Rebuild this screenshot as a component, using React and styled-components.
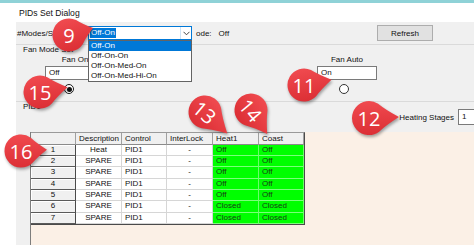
import React from "react";
import styled, { createGlobalStyle } from "styled-components";

const GlobalStyle = createGlobalStyle`
  html, body {
    margin: 0;
    padding: 0;
    background: #ffffff;
  }
  body {
    font-family: "Liberation Sans", Arial, sans-serif;
    font-size: 8px;
    color: #111111;
  }
`;

const Page = styled.div`
  position: relative;
  width: 474px;
  height: 245px;
  overflow: hidden;
  background: #ffffff;
  display: flex;
  flex-direction: column;
`;

const TopLine = styled.div`
  flex: none;
  height: 3px;
  background: #8fd2d7;
`;

const TitleBar = styled.div`
  flex: none;
  height: 19px;
  display: flex;
  align-items: center;
  padding-left: 19px;
  font-size: 8.6px;
  color: #111;
`;

const Dialog = styled.div`
  flex: 1;
  min-height: 0;
  margin-left: 16px;
  background: #f0f0f0;
  display: flex;
  flex-direction: column;
  overflow: hidden;
`;

const TopRow = styled.div`
  flex: none;
  height: 16px;
  margin-top: 3px;
  display: flex;
  align-items: center;
`;

const ModesLabel = styled.div`
  width: 72px;
  padding-left: 1px;
  box-sizing: border-box;
  white-space: nowrap;
  overflow: hidden;
`;

const Combo = styled.div`
  position: relative;
  width: 104px;
  height: 14px;
  box-sizing: border-box;
  border: 1px solid #0078d7;
  background: #fff;
  display: flex;
  align-items: center;
  z-index: 2;
`;

const ComboValue = styled.span`
  margin-left: 1px;
  padding: 0 1px;
  line-height: 10px;
  background: #0078d7;
  color: #fff;
`;

const ComboArrow = styled.div`
  margin-left: auto;
  width: 11px;
  height: 12px;
  box-sizing: border-box;
  border-left: 1px solid #cfe3f5;
  display: flex;
  align-items: center;
  justify-content: center;
`;

const ComboList = styled.ul`
  position: absolute;
  top: 13px;
  left: -1px;
  width: 104px;
  margin: 0;
  padding: 0;
  list-style: none;
  box-sizing: border-box;
  border: 1px solid #646464;
  background: #fff;
`;

const ComboItem = styled.li`
  height: 10px;
  line-height: 10px;
  padding-left: 2px;
  white-space: nowrap;
  background: ${(p) => (p.$active ? "#0078d7" : "transparent")};
  color: ${(p) => (p.$active ? "#fff" : "#111")};
`;

const ModeText = styled.div`
  margin-left: 4px;
  display: flex;
  gap: 7px;
`;

const RefreshButton = styled.button`
  margin-left: auto;
  margin-right: 41px;
  width: 56px;
  height: 16px;
  padding: 0;
  box-sizing: border-box;
  border: 1px solid #adadad;
  background: #e1e1e1;
  font-family: "Liberation Sans", Arial, sans-serif;
  font-size: 8px;
  color: #111;
`;

const Separator = styled.div`
  flex: none;
  margin-top: ${(p) => p.$top || 0}px;
  border-top: 1px solid #dadada;
`;

const FanSection = styled.div`
  flex: none;
  height: 56px;
`;

const SectionLabel = styled.div`
  height: 9px;
  line-height: 9px;
  padding-left: 7px;
  white-space: nowrap;
`;

const FanRow = styled.div`
  display: flex;
  gap: 212px;
  padding-left: 29px;
`;

const FanGroup = styled.div`
  width: 60px;
  display: flex;
  flex-direction: column;
  align-items: center;
`;

const FanLabel = styled.div`
  margin-top: 1px;
  height: 9px;
  line-height: 9px;
  white-space: nowrap;
`;

const TextBox = styled.div`
  margin-top: 2px;
  height: 14px;
  box-sizing: border-box;
  border: 1px solid #7a7a7a;
  background: #fff;
  padding-left: 3px;
  line-height: 12px;
  align-self: stretch;
`;

const Radio = styled.div`
  margin-top: 4px;
  margin-right: ${(p) => p.$shift}px;
  width: 10px;
  height: 10px;
  box-sizing: border-box;
  border-radius: 50%;
  border: ${(p) => (p.$checked ? "1.5px solid #1a1a1a" : "1px solid #333")};
  background: #fff;
  display: flex;
  align-items: center;
  justify-content: center;

  &::after {
    content: "";
    width: 5px;
    height: 5px;
    border-radius: 50%;
    background: ${(p) => (p.$checked ? "#111" : "transparent")};
  }
`;

const PidRow = styled.div`
  flex: none;
  height: 24px;
  display: flex;
  justify-content: space-between;
`;

const StagesGroup = styled.div`
  align-self: flex-end;
  margin-bottom: 1px;
  display: flex;
  align-items: center;
  gap: 4px;
  margin-right: -14px;
`;

const StagesInput = styled.div`
  width: 30px;
  height: 16px;
  box-sizing: border-box;
  border: 1px solid #7a7a7a;
  background: #fff;
  padding-left: 3px;
  line-height: 14px;
`;

const TableArea = styled.div`
  flex: 1;
  margin-top: 6px;
  margin-left: 14px;
  background: #fbf0e6;
  border-left: 1px solid #7d7d7d;
`;

const Grid = styled.div`
  display: grid;
  grid-template-columns: 45px 46px 45px 46px 46px 45px;
  grid-template-rows: 12px 11px 11px 12px 11px 11px 12px 11px;
  width: max-content;
  border-top: 1px solid #9a9a9a;
  border-right: 1px solid #4a4a4a;
  border-bottom: 1px solid #4a4a4a;
`;

const HeaderCell = styled.div`
  box-sizing: border-box;
  background: #f0f0f0;
  border-right: 1px solid #a0a0a0;
  border-bottom: 1px solid #8a8a8a;
  padding-left: 3px;
  line-height: 11px;
  white-space: nowrap;
`;

const RowHeadCell = styled.div`
  box-sizing: border-box;
  background: #f0f0f0;
  border-right: 1px solid #4a4a4a;
  border-bottom: 1px solid #5a5a5a;
  box-shadow: inset 1px 1px 0 #ffffff;
  text-align: center;
  line-height: 10px;
`;

const DataCell = styled.div`
  box-sizing: border-box;
  background: ${(p) => (p.$green ? "#00ff00" : "#ffffff")};
  border-right: 1px solid ${(p) => (p.$green ? "#6bff6b" : "#d6d6d6")};
  border-bottom: 1px solid ${(p) => (p.$green ? "#7bff7b" : "#d6d6d6")};
  color: ${(p) => (p.$green ? "#173d17" : "#111")};
  text-align: ${(p) => p.$align || "left"};
  padding-left: ${(p) => (p.$align === "center" ? 0 : 3)}px;
  line-height: 10px;
  white-space: nowrap;
`;

const PinWrap = styled.div`
  position: absolute;
  left: ${(p) => p.$x - 40}px;
  top: ${(p) => p.$y - 40}px;
  width: 80px;
  height: 80px;
  pointer-events: none;
  z-index: 5;
`;

const PinSvg = styled.svg`
  position: absolute;
  left: 0;
  top: 0;
  overflow: visible;
  filter: drop-shadow(1px 2px 1.5px rgba(0, 0, 0, 0.35));
`;

const PinText = styled.span`
  position: absolute;
  left: 0;
  top: 0;
  width: 80px;
  height: 80px;
  display: flex;
  align-items: center;
  justify-content: center;
  color: #ffffff;
  font-family: "Open Sans", "Liberation Sans", sans-serif;
  font-size: 20px;
  transform: rotate(${(p) => p.$rot}deg);
`;

const Pin = ({ x, y, r, d, angle, textAngle = 0, label }) => {
  const a = Math.acos(r / d);
  const px = r * Math.cos(a);
  const py = r * Math.sin(a);
  const path = `M ${d} 0 Q ${px + (d - px) * 0.35} ${-py * 0.55} ${px} ${-py} A ${r} ${r} 0 1 0 ${px} ${py} Q ${px + (d - px) * 0.35} ${py * 0.55} ${d} 0 Z`;
  return (
    <PinWrap $x={x} $y={y}>
      <PinSvg width="80" height="80" viewBox="-40 -40 80 80">
        <defs>
          <linearGradient id={`pg${label}`} x1="0" y1="0" x2="0" y2="1">
            <stop offset="0" stopColor="#f04a4f" />
            <stop offset="1" stopColor="#dc2f35" />
          </linearGradient>
        </defs>
        <path d={path} fill={`url(#pg${label})`} transform={`rotate(${angle})`} />
      </PinSvg>
      <PinText $rot={textAngle}>{label}</PinText>
    </PinWrap>
  );
};

const pins = [
  { label: "9", x: 69, y: 35, r: 16.5, d: 25, angle: -16 },
  { label: "15", x: 40, y: 92, r: 16.5, d: 28, angle: -10 },
  { label: "16", x: 21, y: 151, r: 16.5, d: 26, angle: -3 },
  { label: "11", x: 304, y: 85, r: 16.5, d: 28, angle: -11 },
  { label: "12", x: 369, y: 118, r: 17, d: 30, angle: -2 },
  { label: "13", x: 205, y: 112, r: 16.5, d: 31, angle: 44, textAngle: 40 },
  { label: "14", x: 251, y: 110, r: 16.5, d: 29, angle: 56, textAngle: 50 },
];

const modes = ["Off-On", "Off-On-On", "Off-On-Med-On", "Off-On-Med-Hi-On"];

const rows = [
  { desc: "Heat", heat: "Off", coast: "Off" },
  { desc: "SPARE", heat: "Off", coast: "Off" },
  { desc: "SPARE", heat: "Off", coast: "Off" },
  { desc: "SPARE", heat: "Off", coast: "Off" },
  { desc: "SPARE", heat: "Off", coast: "Off" },
  { desc: "SPARE", heat: "Closed", coast: "Closed" },
  { desc: "SPARE", heat: "Closed", coast: "Closed" },
];

const columns = ["", "Description", "Control", "InterLock", "Heat1", "Coast"];

export default function App() {
  return (
    <Page>
      <GlobalStyle />
      <TopLine />
      <TitleBar>PIDs Set Dialog</TitleBar>
      <Dialog>
        <TopRow>
          <ModesLabel>#Modes/Stages</ModesLabel>
          <Combo>
            <ComboValue>Off-On</ComboValue>
            <ComboArrow>
              <svg width="7" height="5" viewBox="0 0 7 5">
                <polyline points="0.5,0.8 3.5,3.8 6.5,0.8" fill="none" stroke="#444" strokeWidth="1" />
              </svg>
            </ComboArrow>
            <ComboList>
              {modes.map((m, i) => (
                <ComboItem key={m} $active={i === 0}>
                  {m}
                </ComboItem>
              ))}
            </ComboList>
          </Combo>
          <ModeText>
            <span>ode:</span>
            <span>Off</span>
          </ModeText>
          <RefreshButton>Refresh</RefreshButton>
        </TopRow>
        <Separator $top={3} />
        <FanSection>
          <SectionLabel>Fan Mode Set</SectionLabel>
          <FanRow>
            <FanGroup>
              <FanLabel>Fan On</FanLabel>
              <TextBox>Off</TextBox>
              <Radio $checked $shift={12} />
            </FanGroup>
            <FanGroup>
              <FanLabel>Fan Auto</FanLabel>
              <TextBox>On</TextBox>
              <Radio $shift={6} />
            </FanGroup>
          </FanRow>
        </FanSection>
        <Separator />
        <PidRow>
          <SectionLabel>PID1</SectionLabel>
          <StagesGroup>
            <span>Heating Stages</span>
            <StagesInput>1</StagesInput>
          </StagesGroup>
        </PidRow>
        <TableArea>
          <Grid>
            {columns.map((c, i) => (
              <HeaderCell key={i}>{c}</HeaderCell>
            ))}
            {rows.map((r, i) => (
              <React.Fragment key={i}>
                <RowHeadCell>{i + 1}</RowHeadCell>
                <DataCell $align="center">{r.desc}</DataCell>
                <DataCell>PID1</DataCell>
                <DataCell $align="center">-</DataCell>
                <DataCell $green>{r.heat}</DataCell>
                <DataCell $green>{r.coast}</DataCell>
              </React.Fragment>
            ))}
          </Grid>
        </TableArea>
      </Dialog>
      {pins.map((p) => (
        <Pin key={p.label} {...p} />
      ))}
    </Page>
  );
}
